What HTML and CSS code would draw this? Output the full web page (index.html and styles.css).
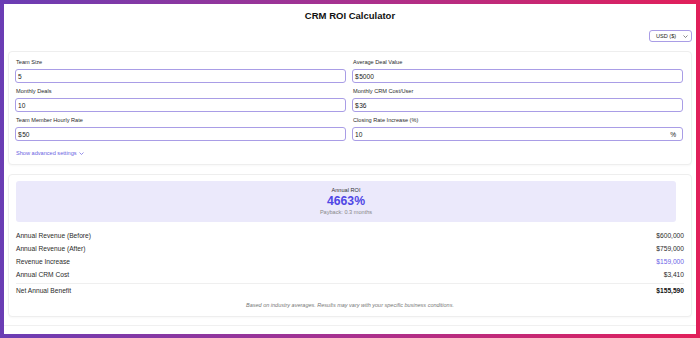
FILE: index.html
```html
<!DOCTYPE html>
<html lang="en">
<head>
<meta charset="utf-8">
<title>CRM ROI Calculator</title>
<link rel="stylesheet" href="styles.css">
</head>
<body>
<div class="frame">
  <main class="app">
    <h1 class="title">CRM ROI Calculator</h1>
    <div class="toolbar">
      <div class="select">
        <span>USD ($)</span>
        <svg class="chev" viewBox="0 0 10 6" width="5" height="3"><path d="M1 1l4 4 4-4" fill="none" stroke="#555" stroke-width="1.4"/></svg>
      </div>
    </div>

    <section class="card inputs">
      <div class="grid">
        <div class="field">
          <label class="label">Team Size</label>
          <div class="box"><span class="val">5</span></div>
        </div>
        <div class="field">
          <label class="label">Average Deal Value</label>
          <div class="box"><span class="pre">$</span><span class="val">5000</span></div>
        </div>
        <div class="field">
          <label class="label">Monthly Deals</label>
          <div class="box"><span class="val">10</span></div>
        </div>
        <div class="field">
          <label class="label">Monthly CRM Cost/User</label>
          <div class="box"><span class="pre">$</span><span class="val">36</span></div>
        </div>
        <div class="field">
          <label class="label">Team Member Hourly Rate</label>
          <div class="box"><span class="pre">$</span><span class="val">50</span></div>
        </div>
        <div class="field">
          <label class="label">Closing Rate Increase (%)</label>
          <div class="box"><span class="val">10</span><span class="suf">%</span></div>
        </div>
      </div>
      <a class="advanced">Show advanced settings <svg viewBox="0 0 10 6" width="5" height="3"><path d="M1 1l4 4 4-4" fill="none" stroke="#6a62e2" stroke-width="1.4"/></svg></a>
    </section>

    <section class="card results">
      <div class="roi">
        <div class="roi-label">Annual ROI</div>
        <div class="roi-value">4663%</div>
        <div class="roi-sub">Payback: 0.3 months</div>
      </div>
      <div class="rows">
        <div class="row"><span>Annual Revenue (Before)</span><span>$600,000</span></div>
        <div class="row"><span>Annual Revenue (After)</span><span>$759,000</span></div>
        <div class="row"><span>Revenue Increase</span><span class="accent">$159,000</span></div>
        <div class="row"><span>Annual CRM Cost</span><span>$3,410</span></div>
        <div class="row total"><span>Net Annual Benefit</span><span class="strong">$155,590</span></div>
      </div>
      <p class="note">Based on industry averages. Results may vary with your specific business conditions.</p>
    </section>
    <div class="footer"></div>
  </main>
</div>
</body>
</html>
```

FILE: styles.css
```css
* { box-sizing: border-box; }
html, body { margin: 0; height: 338px; overflow: hidden; }
body {
  font-family: "Liberation Sans", Arial, sans-serif;
  background: linear-gradient(90deg, #6a3db4 0%, #a8318f 50%, #e21f5a 100%);
  color: #333;
}
.frame { padding: 4px; height: 338px; }
.app {
  background: #fff;
  height: 330px;
  overflow: hidden;
  display: flex;
  flex-direction: column;
}
.title {
  margin: 6px 0 0;
  font-size: 9.5px;
  line-height: 12px;
  font-weight: bold;
  text-align: center;
  color: #111;
}
.toolbar {
  display: flex;
  justify-content: flex-end;
  padding: 0 4px;
  margin-top: 8px;
}
.select {
  width: 43px;
  height: 12px;
  border: 1px solid #a99de6;
  border-radius: 3px;
  display: flex;
  align-items: center;
  justify-content: space-between;
  padding: 0 3px 0 6px;
  font-size: 5.6px;
  color: #222;
}
.chev { display: block; }
.card {
  margin: 9px 4px 0;
  border: 1px solid #eeeeee;
  border-radius: 4px;
  box-shadow: 0 1px 2px rgba(0,0,0,0.03);
  background: #fff;
}
.inputs { padding: 7px 8px 5px 6px; }
.grid {
  display: grid;
  grid-template-columns: 1fr 1fr;
  column-gap: 6px;
  row-gap: 5px;
}
.field { display: flex; flex-direction: column; }
.label {
  font-size: 5.6px;
  line-height: 7px;
  color: #2a2a2a;
  padding-left: 1px;
}
.box {
  margin-top: 3px;
  height: 14px;
  border: 1px solid #a99de6;
  border-radius: 3px;
  display: flex;
  align-items: center;
  padding: 0 3px 0 2px;
  font-size: 6.6px;
  color: #222;
}
.pre { margin-right: 0.5px; }
.val { flex: 1; }
.suf { margin-right: 3px; }
.advanced {
  display: inline-flex;
  align-items: center;
  gap: 2px;
  margin-top: 9px;
  padding-left: 1px;
  font-size: 5.6px;
  line-height: 7px;
  color: #6a62e2;
}
.advanced svg { display: block; }
.results { margin-top: 9px; padding: 6px 7px 7px 7px; }
.roi {
  background: #ebe9fb;
  border-radius: 3px;
  margin-right: 8px;
  height: 41px;
  text-align: center;
  padding-top: 5px;
}
.roi-label { font-size: 5.6px; line-height: 8px; color: #333; }
.roi-value {
  font-size: 12.2px;
  line-height: 14px;
  font-weight: bold;
  color: #4f46e5;
}
.roi-sub { font-size: 5.6px; line-height: 8px; color: #888; }
.rows { margin-top: 6.5px; }
.row {
  display: flex;
  justify-content: space-between;
  font-size: 6.65px;
  line-height: 13px;
  color: #2a2a2a;
}
.accent { color: #6d63e6; }
.row.total {
  margin-top: 2px;
  border-top: 1px solid #efefef;
  padding-top: 3px;
  line-height: 8px;
}
.strong { font-weight: bold; color: #111; }
.note {
  margin: 6px 0 0;
  text-align: center;
  font-style: italic;
  font-size: 5.5px;
  line-height: 8px;
  color: #777;
}
.footer {
  margin-top: 8px;
  border-top: 1px solid #f0f0f0;
  flex: 1;
}
```
